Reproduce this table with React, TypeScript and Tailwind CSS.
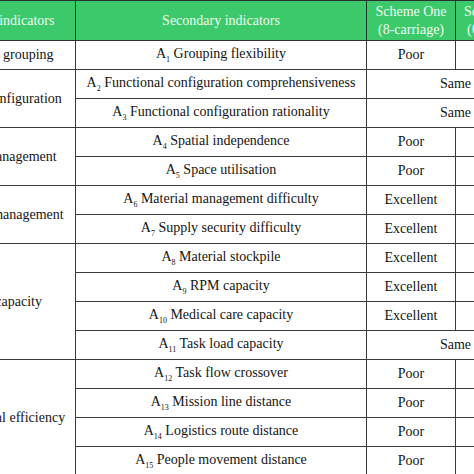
const HEAD_CELL =
  'border border-[#2f2f2f] bg-[#3cc96c] px-1 text-center align-middle font-normal leading-[18px] text-[#eefaf1]';
const CELL = 'h-[29px] border border-[#3a3a3a] px-1 text-center align-middle leading-[18px] text-[#141414]';

type Row = {
  group?: { label: string; span: number };
  index: number;
  name: string;
  one: string;
  two?: string;
  same?: boolean;
};

const ROWS: Row[] = [
  { group: { label: 'Carriage grouping', span: 1 }, index: 1, name: 'Grouping flexibility', one: 'Poor' },
  {
    group: { label: 'Layout configuration', span: 2 },
    index: 2,
    name: 'Functional configuration comprehensiveness',
    one: 'Same',
    same: true,
  },
  { index: 3, name: 'Functional configuration rationality', one: 'Same', same: true },
  { group: { label: 'Space management', span: 2 }, index: 4, name: 'Spatial independence', one: 'Poor' },
  { index: 5, name: 'Space utilisation', one: 'Poor' },
  {
    group: { label: 'Material management', span: 2 },
    index: 6,
    name: 'Material management difficulty',
    one: 'Excellent',
  },
  { index: 7, name: 'Supply security difficulty', one: 'Excellent' },
  { group: { label: 'Load capacity', span: 4 }, index: 8, name: 'Material stockpile', one: 'Excellent' },
  { index: 9, name: 'RPM capacity', one: 'Excellent' },
  { index: 10, name: 'Medical care capacity', one: 'Excellent' },
  { index: 11, name: 'Task load capacity', one: 'Same', same: true },
  {
    group: { label: 'Operational efficiency', span: 4 },
    index: 12,
    name: 'Task flow crossover',
    one: 'Poor',
  },
  { index: 13, name: 'Mission line distance', one: 'Poor' },
  { index: 14, name: 'Logistics route distance', one: 'Poor' },
  { index: 15, name: 'People movement distance', one: 'Poor' },
];

function Indicator({ index, name }: { index: number; name: string }) {
  return (
    <span>
      A<span className="relative top-[4px] text-[8px]">{index}</span> {name}
    </span>
  );
}

// The table is wider than the window; it is shifted left so that the
// first column shows only its right part, as in the cropped figure.
export default function App() {
  return (
    <div
      className="h-[474px] w-[474px] overflow-hidden bg-white text-[14px]"
      style={{ fontFamily: '"Liberation Serif", "Times New Roman", serif' }}
    >
      <table className="ml-[-71px] w-[615px] table-fixed border-collapse">
        <colgroup>
          <col className="w-[146px]" />
          <col className="w-[291px]" />
          <col className="w-[89px]" />
          <col className="w-[89px]" />
        </colgroup>
        <thead>
          <tr className="h-[40px]">
            <th className={HEAD_CELL}>Primary indicators</th>
            <th className={HEAD_CELL}>Secondary indicators</th>
            <th className={HEAD_CELL}>
              Scheme One
              <br />
              (8-carriage)
            </th>
            <th className={HEAD_CELL}>
              Scheme Two
              <br />
              (6-carriage)
            </th>
          </tr>
        </thead>
        <tbody>
          {ROWS.map((row) => (
            <tr key={row.index}>
              {row.group && (
                <td rowSpan={row.group.span} className={CELL}>
                  {row.group.label}
                </td>
              )}
              <td className={CELL}>
                <Indicator index={row.index} name={row.name} />
              </td>
              {row.same ? (
                <td colSpan={2} className={CELL}>
                  Same
                </td>
              ) : (
                <>
                  <td className={CELL}>{row.one}</td>
                  <td className={CELL}>{row.two ?? ''}</td>
                </>
              )}
            </tr>
          ))}
        </tbody>
      </table>
    </div>
  );
}
